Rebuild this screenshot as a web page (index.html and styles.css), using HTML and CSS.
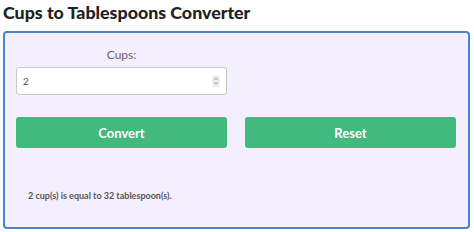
FILE: index.html
```html
<!DOCTYPE html>
<html>
<head>
<meta charset="utf-8">
<link rel="stylesheet" href="styles.css">
</head>
<body>
<h1 class="title">Cups to Tablespoons Converter</h1>
<div class="card">
  <div class="grid">
    <div class="field">
      <label class="label" for="cups">Cups:</label>
      <div class="input-wrap">
        <input class="input" id="cups" type="text" value="2">
        <span class="spinner">
          <svg width="8" height="12" viewBox="0 0 8 12"><path d="M2 5 L4 3 L6 5 M2 7 L4 9 L6 7" fill="none" stroke="#888" stroke-width="0.8"/></svg>
        </span>
      </div>
    </div>
    <div></div>
    <button class="btn">Convert</button>
    <button class="btn">Reset</button>
  </div>
  <p class="result">2 cup(s) is equal to 32 tablespoon(s).</p>
</div>
</body>
</html>
```
FILE: styles.css
```css
body {
  margin: 0;
  padding: 0 4px 0 3px;
  background: #fff;
  font-family: Lato, "Open Sans", sans-serif;
}
.title {
  margin: 0;
  height: 31px;
  font-size: 17.8px;
  line-height: 24px;
  font-weight: 900;
  color: #222;
}
.card {
  border: 2px solid #4a86c8;
  border-radius: 4px;
  background: #f4effd;
  padding: 14px 12px 24px 11px;
  height: 198px;
  box-sizing: border-box;
}
.grid {
  display: grid;
  grid-template-columns: 1fr 1fr;
  column-gap: 18px;
  row-gap: 22px;
}
.field {
  display: flex;
  flex-direction: column;
  gap: 4px;
}
.label {
  text-align: center;
  font-size: 12px;
  line-height: 16px;
  color: #666;
}
.input-wrap {
  position: relative;
}
.input {
  display: block;
  width: 100%;
  box-sizing: border-box;
  height: 28px;
  border: 1px solid #c8c8c8;
  border-radius: 3px;
  background: #fff;
  padding: 0 6px;
  font-family: inherit;
  font-size: 10px;
  color: #555;
  outline: none;
}
.spinner {
  position: absolute;
  right: 7px;
  top: 8px;
  width: 8px;
  height: 12px;
  background: #eee;
  border-radius: 2px;
  display: flex;
}
.btn {
  height: 31px;
  border: none;
  border-radius: 3px;
  background: #41b97f;
  color: #fff;
  font-family: inherit;
  font-size: 13px;
  font-weight: 700;
}
.result {
  margin: 41px 0 0 12px;
  font-size: 9px;
  line-height: 14px;
  font-weight: 700;
  color: #555;
}
```
